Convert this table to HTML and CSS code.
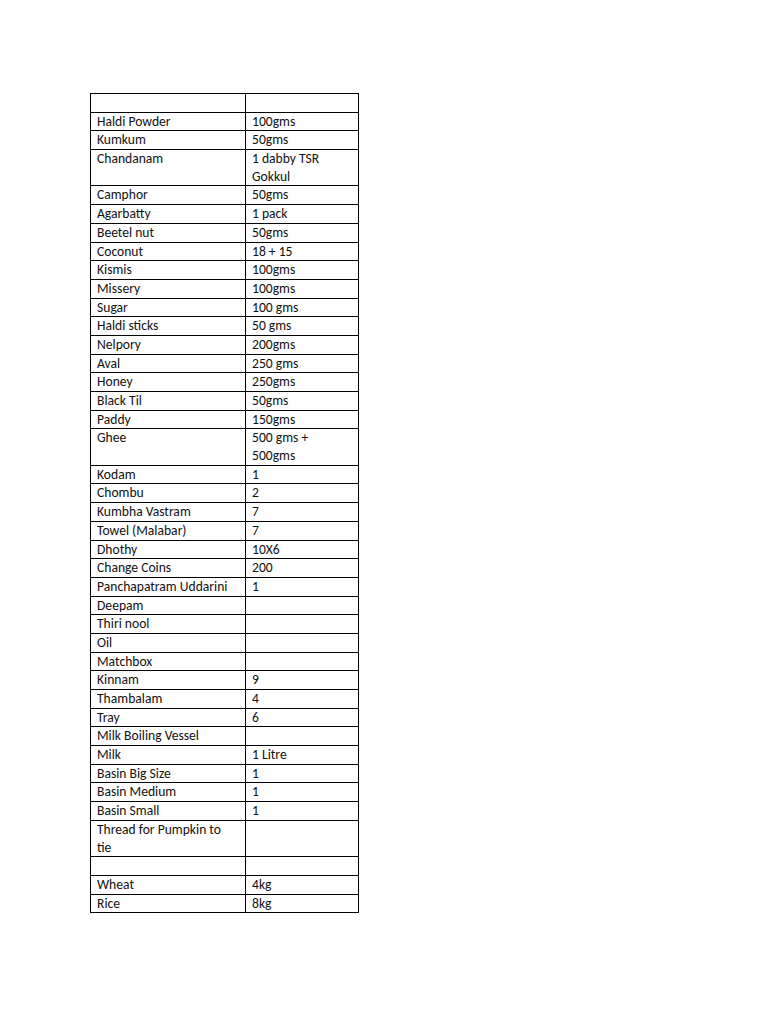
FILE: index.html
```html
<!DOCTYPE html>
<html>
<head>
<meta charset="utf-8">
<link rel="stylesheet" href="styles.css">
</head>
<body>
<div class="page">
<table class="list">
<colgroup><col class="c1"><col class="c2"></colgroup>
<tr><td>&nbsp;</td><td></td></tr>
<tr><td>Haldi Powder</td><td>100gms</td></tr>
<tr><td>Kumkum</td><td>50gms</td></tr>
<tr><td>Chandanam</td><td>1 dabby TSR<br>Gokkul</td></tr>
<tr><td>Camphor</td><td>50gms</td></tr>
<tr><td>Agarbatty</td><td>1 pack</td></tr>
<tr><td>Beetel nut</td><td>50gms</td></tr>
<tr><td>Coconut</td><td>18 + 15</td></tr>
<tr><td>Kismis</td><td>100gms</td></tr>
<tr><td>Missery</td><td>100gms</td></tr>
<tr><td>Sugar</td><td>100 gms</td></tr>
<tr><td>Haldi sticks</td><td>50 gms</td></tr>
<tr><td>Nelpory</td><td>200gms</td></tr>
<tr><td>Aval</td><td>250 gms</td></tr>
<tr><td>Honey</td><td>250gms</td></tr>
<tr><td>Black Til</td><td>50gms</td></tr>
<tr><td>Paddy</td><td>150gms</td></tr>
<tr><td>Ghee</td><td>500 gms +<br>500gms</td></tr>
<tr><td>Kodam</td><td>1</td></tr>
<tr><td>Chombu</td><td>2</td></tr>
<tr><td>Kumbha Vastram</td><td>7</td></tr>
<tr><td>Towel (Malabar)</td><td>7</td></tr>
<tr><td>Dhothy</td><td>10X6</td></tr>
<tr><td>Change Coins</td><td>200</td></tr>
<tr><td>Panchapatram Uddarini</td><td>1</td></tr>
<tr><td>Deepam</td><td></td></tr>
<tr><td>Thiri nool</td><td></td></tr>
<tr><td>Oil</td><td></td></tr>
<tr><td>Matchbox</td><td></td></tr>
<tr><td>Kinnam</td><td>9</td></tr>
<tr><td>Thambalam</td><td>4</td></tr>
<tr><td>Tray</td><td>6</td></tr>
<tr><td>Milk Boiling Vessel</td><td></td></tr>
<tr><td>Milk</td><td>1 Litre</td></tr>
<tr><td>Basin Big Size</td><td>1</td></tr>
<tr><td>Basin Medium</td><td>1</td></tr>
<tr><td>Basin Small</td><td>1</td></tr>
<tr><td>Thread for Pumpkin to<br>tie</td><td></td></tr>
<tr><td>&nbsp;</td><td></td></tr>
<tr><td>Wheat</td><td>4kg</td></tr>
<tr><td>Rice</td><td>8kg</td></tr>
</table>
</div>
</body>
</html>
```
FILE: styles.css
```css
html, body {
  margin: 0;
  padding: 0;
  background: #ffffff;
}
.page {
  padding: 93px 0 0 90px;
}
.list {
  border-collapse: collapse;
  table-layout: fixed;
  width: 268px;
  font-family: Carlito, Lato, "Liberation Sans", sans-serif;
  font-size: 13.6px;
  color: #111111;
}
.c1 { width: 155px; }
.c2 { width: 113px; }
.list td {
  border: 1px solid #000000;
  padding: 0 4px 0 6px;
  line-height: 17.68px;
  height: 17.68px;
  vertical-align: top;
  white-space: nowrap;
}
```
